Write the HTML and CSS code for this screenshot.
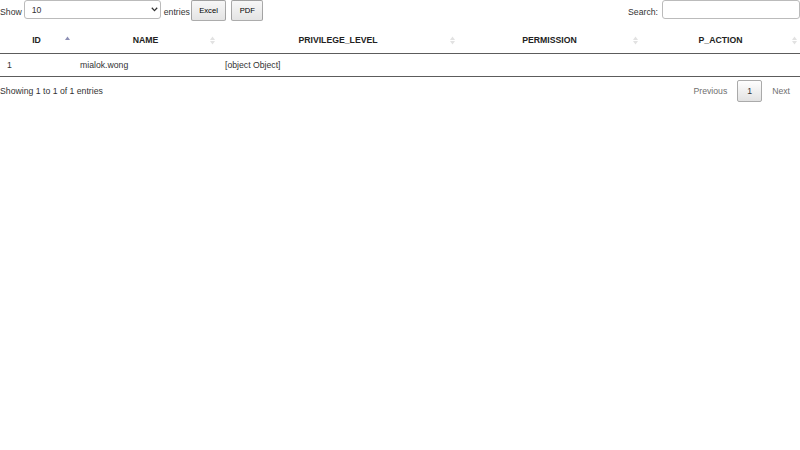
FILE: index.html
```html
<!DOCTYPE html>
<html>
<head>
<meta charset="utf-8">
<link rel="stylesheet" href="styles.css">
</head>
<body>
<div class="wrapper">
  <div class="toolbar">
    <div class="left">
      <span class="lbl">Show</span>
      <span class="selwrap">
        <select class="len"><option>10</option><option>25</option><option>50</option><option>100</option></select>
        <svg class="chev" width="7" height="5" viewBox="0 0 7 5"><polyline points="0.8,0.8 3.5,3.6 6.2,0.8" fill="none" stroke="#333" stroke-width="1.3"/></svg>
      </span>
      <span class="lbl">entries</span>
      <button class="btn">Excel</button>
      <button class="btn btn2">PDF</button>
    </div>
    <div class="right">
      <span class="lbl">Search:</span>
      <input class="search" type="search">
    </div>
  </div>
  <table class="grid">
    <colgroup>
      <col class="c1"><col class="c2"><col class="c3"><col class="c4"><col class="c5">
    </colgroup>
    <thead>
      <tr>
        <th>ID<svg class="sort" width="5" height="9" viewBox="0 0 5 9"><polygon points="0,4 2.5,0.5 5,4" fill="#8d8fb5"/></svg></th>
        <th>NAME<svg class="sort" width="5" height="9" viewBox="0 0 5 9"><polygon points="0,4 2.5,0.5 5,4" fill="#e2e2e2"/><polygon points="0,5 5,5 2.5,8.5" fill="#e2e2e2"/></svg></th>
        <th>PRIVILEGE_LEVEL<svg class="sort" width="5" height="9" viewBox="0 0 5 9"><polygon points="0,4 2.5,0.5 5,4" fill="#e2e2e2"/><polygon points="0,5 5,5 2.5,8.5" fill="#e2e2e2"/></svg></th>
        <th>PERMISSION<svg class="sort" width="5" height="9" viewBox="0 0 5 9"><polygon points="0,4 2.5,0.5 5,4" fill="#e2e2e2"/><polygon points="0,5 5,5 2.5,8.5" fill="#e2e2e2"/></svg></th>
        <th>P_ACTION<svg class="sort" width="5" height="9" viewBox="0 0 5 9"><polygon points="0,4 2.5,0.5 5,4" fill="#e2e2e2"/><polygon points="0,5 5,5 2.5,8.5" fill="#e2e2e2"/></svg></th>
      </tr>
    </thead>
    <tbody>
      <tr>
        <td>1</td>
        <td>mialok.wong</td>
        <td>[object Object]</td>
        <td></td>
        <td></td>
      </tr>
    </tbody>
  </table>
  <div class="footer">
    <div class="info">Showing 1 to 1 of 1 entries</div>
    <div class="paging">
      <span class="pb disabled">Previous</span>
      <span class="pb current">1</span>
      <span class="pb disabled">Next</span>
    </div>
  </div>
</div>
</body>
</html>
```
FILE: styles.css
```css
html, body {
  margin: 0;
  padding: 0;
  background: #fff;
}
body {
  font-family: "Liberation Sans", Arial, sans-serif;
  font-size: 8.7px;
  color: #333;
}
.wrapper {
  width: 800px;
}
.toolbar {
  display: flex;
  justify-content: space-between;
  align-items: flex-start;
  height: 21px;
}
.left, .right {
  display: flex;
  align-items: flex-start;
}
.lbl {
  line-height: 19px;
  padding-top: 3px;
  height: 19px;
}
.selwrap {
  position: relative;
  display: block;
  margin: 0 3px 0 2px;
  height: 19px;
}
.len {
  display: block;
  width: 137px;
  height: 19px;
  margin: 0;
  padding: 0 0 0 7px;
  border: 1px solid #bbb;
  border-radius: 3px;
  background: #fff;
  font-family: "Liberation Sans", Arial, sans-serif;
  font-size: 8.7px;
  color: #333;
  -webkit-appearance: none;
  appearance: none;
  outline: none;
}
.chev {
  position: absolute;
  right: 3px;
  top: 7px;
  pointer-events: none;
}
.btn {
  font-family: "Liberation Sans", Arial, sans-serif;
  font-size: 7.65px;
  line-height: 1.6;
  padding: 3.6px 7.4px;
  height: 21px;
  margin: 0 0 0 1px;
  border: 1px solid rgba(0,0,0,0.3);
  border-radius: 2px;
  color: #000;
  background: linear-gradient(to bottom, #f7f7f7 0%, #e4e4e4 100%);
  box-sizing: border-box;
}
.btn2 {
  margin-left: 5px;
}
.search {
  width: 138px;
  height: 19px;
  margin: 0 0 0 4px;
  padding: 0 4px;
  box-sizing: border-box;
  border: 1px solid #bbb;
  border-radius: 3px;
  background: #fff;
  font-size: 8.7px;
}
.grid {
  width: 800px;
  margin-top: 7px;
  border-collapse: collapse;
  table-layout: fixed;
}
.c1 { width: 73px; }
.c2 { width: 145px; }
.c3 { width: 240px; }
.c4 { width: 183px; }
.c5 { width: 159px; }
.grid th {
  position: relative;
  height: 25px;
  padding: 0;
  text-align: center;
  font-weight: bold;
  color: #222;
  border-bottom: 1px solid #5c5c5c;
  box-sizing: border-box;
}
.sort {
  position: absolute;
  right: 3px;
  top: 8px;
}
.grid td {
  height: 22px;
  padding: 0 7px;
  border-bottom: 1px solid #5c5c5c;
  color: #333;
  white-space: nowrap;
}
.footer {
  display: flex;
  justify-content: space-between;
  align-items: center;
  margin-top: 3px;
  height: 22px;
}
.info {
  padding-top: 1px;
}
.paging {
  display: flex;
  align-items: center;
}
.pb {
  display: block;
  line-height: 20px;
  padding: 0 10px;
}
.pb.disabled {
  color: #6f6f6f;
}
.pb.current {
  padding: 0 9px;
  border: 1px solid #aaa;
  border-radius: 2px;
  color: #333;
  background: linear-gradient(to bottom, #fefefe 0%, #e2e2e2 100%);
}
```
